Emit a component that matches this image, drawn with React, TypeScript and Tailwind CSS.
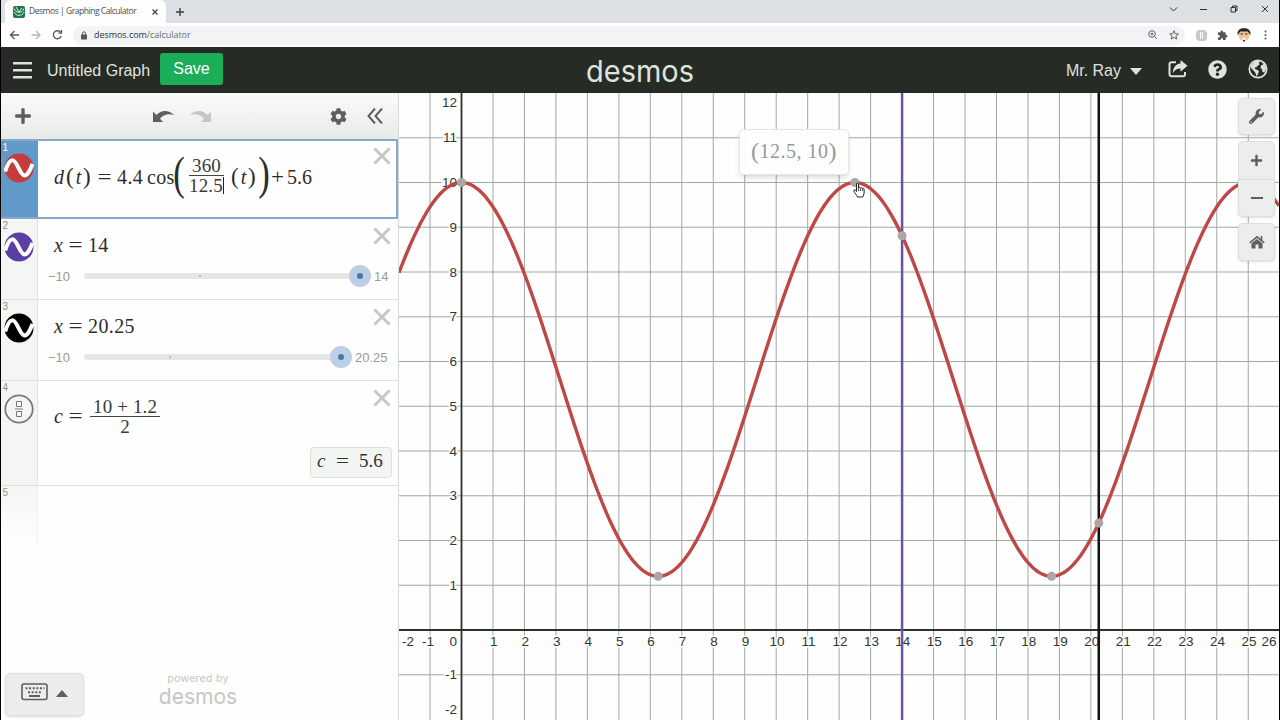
import type { ReactNode } from 'react';
import { FaCog, FaPlus, FaQuestionCircle, FaWrench } from 'react-icons/fa';
import { MdExtension } from 'react-icons/md';

// Graph paper: pixel size of the paper and the scale of one unit on each axis
const W = 880;
const H = 627;
const ORIGIN_X = 62.5;
const ORIGIN_Y = 537;
const UNIT_X = 31.47;
const UNIT_Y = 44.75;

const toX = (x: number) => ORIGIN_X + x * UNIT_X;
const toY = (y: number) => ORIGIN_Y - y * UNIT_Y;
const range = (from: number, to: number) =>
  Array.from({ length: to - from + 1 }, (_, i) => from + i);

const curve = Array.from({ length: W / 2 + 1 }, (_, i) => {
  const x = (i * 2 - ORIGIN_X) / UNIT_X;
  const y = 4.4 * Math.cos((2 * Math.PI * x) / 12.5) + 5.6;
  return `${i * 2},${toY(y).toFixed(2)}`;
}).join(' ');

const points = [
  [0, 10],
  [6.25, 1.2],
  [12.5, 10],
  [14, 8.81],
  [18.75, 1.2],
  [20.25, 2.39],
];

function Wordmark({ className, width }: { className: string; width: number }) {
  return (
    <svg
      className={`overflow-visible ${className}`}
      viewBox="0 0 110 38"
      width={width}
      height={(width * 38) / 110}
    >
      <text
        x="1"
        y="30"
        textLength="108"
        lengthAdjust="spacingAndGlyphs"
        fontFamily="Inter, sans-serif"
        fontSize="30"
        fill="currentColor"
      >
        desmos
      </text>
    </svg>
  );
}

function TabStrip() {
  return (
    <div className="flex h-[23px] bg-[#dee1e3] pl-1">
      <div className="flex w-[161px] items-center rounded-t-md bg-[#fdfefd] pl-2 pr-1.5">
        <svg width="12" height="12" viewBox="0 0 12 12" className="shrink-0">
          <rect width="12" height="12" rx="2" fill="#1c7a49" />
          <path d="M1 2.500c1.500 5 8.500 5 10 0M1 6c2 4.500 8 4.500 10 0M3 1l3 5 3-4" fill="none" stroke="#d8efe0" strokeWidth="1" />
        </svg>
        <span className="ml-1 whitespace-nowrap font-['Open_Sans',sans-serif] text-[8.500px] tracking-[-0.460px] text-[#4b4f52]">
          Desmos | Graphing Calculator
        </span>
        <svg width="6" height="6" viewBox="0 0 6 6" className="ml-auto mr-0.5 shrink-0 text-[#3c4043]">
          <path d="M.5.5l5 5M5.500.5l-5 5" stroke="currentColor" strokeWidth="1.200" />
        </svg>
      </div>
      <svg width="8" height="8" viewBox="0 0 8 8" className="ml-2.5 mt-[7.500px] text-[#3c4043]">
        <path d="M4 0v8M0 4h8" stroke="currentColor" strokeWidth="1.400" />
      </svg>
      <svg width="100" height="12" viewBox="0 0 100 12" className="ml-auto mr-2.5 mt-1 text-[#2c2f31]" fill="none" stroke="currentColor">
        <path d="M1 3.500l3.500 3.500L8 3.500" />
        <path d="M31 5.500h7" />
        <path d="M62 3.500h4.500V8H62zM63.500 3V2H68v4.500h-1" />
        <path d="M93 2l6 6M99 2l-6 6" />
      </svg>
    </div>
  );
}

function AddressBar() {
  return (
    <div className="flex h-6 items-center bg-[#fdfefd] pl-2 pr-3">
      <svg width="54" height="12" viewBox="0 0 54 12" fill="none" stroke="#54585b" strokeWidth="1.300">
        <path d="M10 6H1.500M5.500 2l-4 4 4 4" />
        <path d="M22.500 6H31M27 2l4 4-4 4" stroke="#b5b8ba" />
        <path d="M51.500 3.200a4 4 0 1 0 .7 3.800M52.500 1v3.200h-3.200" />
      </svg>
      <div className="ml-2.5 flex h-[19px] flex-1 items-center rounded-full bg-[#f1f3f4] pl-2 pr-1.5">
        <svg width="6" height="9" viewBox="0 0 6 9">
          <rect y="3.500" width="6" height="5" rx=".6" fill="#54585b" />
          <path d="M1.500 4V2.300a1.500 1.500 0 0 1 3 0V4" fill="none" stroke="#54585b" />
        </svg>
        <span className="ml-[7px] font-['Open_Sans',sans-serif] text-[9px] tracking-[-0.050px] text-[#2f3336]">
          desmos.com<span className="text-[#6a6e71]">/calculator</span>
        </span>
        <svg width="32" height="12" viewBox="0 0 32 12" className="ml-auto" fill="none" stroke="#5f6368">
          <circle cx="5" cy="5" r="3.300" />
          <path d="M7.500 7.500L10 10M3.500 5h3M5 3.500v3" />
          <path d="M27 1.700l1.200 3 3.200.2-2.500 2 .9 3.200L27 8.400l-2.800 1.700.9-3.200-2.500-2 3.200-.2z" />
        </svg>
      </div>
      <div className="ml-[11px] flex h-[11px] w-[11px] items-center justify-center rounded-sm bg-[#c5c7c8]">
        <div className="h-[7px] w-[3px] border-x border-white" />
      </div>
      <MdExtension className="ml-2.5 text-[11px] text-[#54585b]" />
      <svg width="14" height="14" viewBox="0 0 14 14" className="ml-[9px]">
        <ellipse cx="7" cy="7" rx="5.500" ry="6" fill="#eec39a" />
        <path d="M.5 7C0 2 3 .3 7 .3S14 2 13.500 7l-1.500-1.500L11 3.500H3L2 5.500z" fill="#34251d" />
        <path d="M3.500 6h2.500M8 6h2.500" stroke="#403027" />
        <path d="M5 10h4v1.500H5z" fill="#fff" />
        <path d="M6 12h2v1.500H6z" fill="#59382a" />
      </svg>
      <svg width="3" height="10" viewBox="0 0 3 10" className="ml-[13px]" fill="#54585b">
        <circle cx="1.500" cy="1.500" r="1" />
        <circle cx="1.500" cy="5" r="1" />
        <circle cx="1.500" cy="8.500" r="1" />
      </svg>
    </div>
  );
}

function AppHeader() {
  return (
    <header className="grid h-[46px] grid-cols-3 items-center bg-[#272b26] font-['Liberation_Sans',sans-serif] text-[#dfe3de]">
      <div className="flex items-center pl-3">
        <svg width="19" height="17" viewBox="0 0 19 17" fill="currentColor">
          <rect width="19" height="2.600" rx=".5" />
          <rect y="7" width="19" height="2.600" rx=".5" />
          <rect y="14" width="19" height="2.600" rx=".5" />
        </svg>
        <span className="ml-[15px] mt-0.5 w-[103px] whitespace-nowrap text-base">Untitled Graph</span>
        <button className="-mt-0.5 ml-2.5 h-8 w-[63px] rounded-[3px] bg-[#1bae58] text-base text-white">Save</button>
      </div>
      <Wordmark className="mt-px justify-self-center" width={110} />
      <div className="flex items-center justify-end pr-[11px]">
        <span className="mt-0.5 text-base">Mr. Ray</span>
        <svg width="12" height="7" viewBox="0 0 12 7" className="ml-[9px] mt-0.5" fill="currentColor">
          <path d="M0 0h12L6 7z" />
        </svg>
        <svg width="20" height="18" viewBox="0 0 20 18" className="-mt-0.5 ml-[26px]">
          <path
            d="M8 2.200H3.500A2 2 0 0 0 1.500 4.200v10a2 2 0 0 0 2 2h11.500a2 2 0 0 0 2-2V12"
            fill="none"
            stroke="currentColor"
            strokeWidth="2"
          />
          <path d="M12.500 0L19.500 5.800l-7 6V8.400C9 8.400 7 9.800 4.800 13 5 8 7.500 3.800 12.500 3.500z" fill="currentColor" />
        </svg>
        <FaQuestionCircle className="-mt-0.5 ml-5 text-[19px]" />
        <svg width="20" height="20" viewBox="0 0 20 20" className="-mt-0.5 ml-[21px]">
          <circle cx="10" cy="10" r="8.700" fill="none" stroke="currentColor" strokeWidth="1.700" />
          <path
            d="M3 6.500L6.500 2.500l3.500-1 2 1.200-1.500 1.600 1.500.8-2 1.300-2 2.200-1.500-.4.8 2L9.500 11l1.500 1.200-.8 2.400-1.700 3L7.500 14 5.500 11.500 3 9zM13 2.800l3.500 2.500 1.600 4-1.600 4.200-2-.6-.5-2.900-1.700-1 1-2.700 2.200-1z"
            fill="currentColor"
          />
        </svg>
      </div>
    </header>
  );
}

function PanelToolbar() {
  return (
    <div className="flex h-[46px] items-center bg-linear-to-b from-[#fafcfa] to-[#e7eae7] pl-[13px] pr-[15px] text-[#5c605c]">
      <FaPlus className="text-[18px]" />
      <svg width="21" height="13" viewBox="0 0 21 13" className="ml-[121px]" fill="currentColor">
        <path d="M0 1.500V12h10L7 8.800C10 5 15 3.300 21 5 16 0 8.500-.8 3.500 5z" />
      </svg>
      <svg width="21" height="13" viewBox="0 0 21 13" className="ml-4 text-[#c4c8c4]" fill="currentColor">
        <path d="M21 1.500V12H11l3-3.200C11 5 6 3.300 0 5 5 0 12.500-.8 17.500 5z" />
      </svg>
      <FaCog className="ml-auto text-[17px]" />
      <svg width="16" height="16" viewBox="0 0 16 16" className="ml-5" fill="none" stroke="currentColor" strokeWidth="2">
        <path d="M8 .5L1.500 8 8 15.500M15 .5L8.500 8l6.500 7.500" />
      </svg>
    </div>
  );
}

function CurveIcon({ color }: { color: string }) {
  return (
    <svg width="30" height="30" viewBox="0 0 30 30">
      <circle cx="15" cy="15" r="14.500" fill={color} />
      <path
        d="M1.200 18.500C3.500 11 6 7.300 8.500 7.300c4.500 0 7.500 15.200 12 15.200 3 0 5.200-4.500 8-11.500"
        fill="none"
        stroke="#fff"
        strokeWidth="4"
      />
    </svg>
  );
}

function FractionIcon() {
  return (
    <svg width="30" height="30" viewBox="0 0 30 30" fill="none" stroke="#777b77">
      <circle cx="15" cy="15" r="13.700" strokeWidth="1.800" />
      <path d="M12.500 7.500h5v5h-5zM12.500 17.500h5v5h-5zM11 15h8" />
    </svg>
  );
}

type RowProps = {
  index: number;
  height: string;
  icon?: ReactNode;
  selected?: boolean;
  children?: ReactNode;
};

function Row({ index, height, icon, selected, children }: RowProps) {
  return (
    <div className={`flex ${height} ${selected ? 'border-2 border-l-0 border-[#84a9cb]' : 'border-b border-[#dbe1db]'}`}>
      <div
        className={`w-[37px] shrink-0 pl-[2.500px] font-['Liberation_Sans',sans-serif] text-[10px] leading-[11px] ${
          selected ? 'bg-[#6399c8] text-white' : 'border-r border-[#dfe6df] bg-[#f4f6f4] text-[#8c908c]'
        }`}
      >
        <div className={selected ? 'h-3 pt-px' : 'h-[13px] pt-px'}>
          <span className="-ml-px">{index}</span>
        </div>
        {icon}
      </div>
      <div className="min-w-0 flex-1 font-['Liberation_Serif',serif] text-[20px] text-[#2c2c2c]">{children}</div>
      <svg
        width="18"
        height="18"
        viewBox="0 0 18 18"
        className={`shrink-0 ${selected ? 'mr-[5px] mt-1.5' : 'mr-[7px] mt-2'}`}
        stroke="#c5c8c5"
        strokeWidth="3"
      >
        <path d="M1.500 1.500l15 15M16.500 1.500l-15 15" />
      </svg>
    </div>
  );
}

function Equals() {
  return <span className="flex w-[13px] shrink-0 scale-x-125 justify-center">=</span>;
}

function Frac({ top, bottom, caret }: { top: string; bottom: string; caret?: boolean }) {
  return (
    <span className="inline-flex flex-col items-stretch text-center text-[19px] leading-[19px] tracking-[0.150px] text-[#3a3a3a]">
      <span className="whitespace-nowrap border-b border-[#444] px-[3px]">{top}</span>
      <span className="flex justify-center">
        {bottom}
        {caret && <span className="h-[17px] w-px self-center bg-[#222]" />}
      </span>
    </span>
  );
}

// Tall bracket that wraps a whole fraction
function TallParen({ children }: { children: string }) {
  return (
    <span className="mb-1.5 flex w-2 shrink-0 scale-x-75 justify-center text-[46px] leading-[46px]">{children}</span>
  );
}

type SliderProps = { value: string; track: string; zero: string };

function Slider({ value, track, zero }: SliderProps) {
  return (
    <div className="-mr-5 flex h-6 items-center pl-2.5 font-['Liberation_Sans',sans-serif] text-[13px] text-[#999c99]">
      <span className="w-9 pt-px">−10</span>
      <div className={`flex h-1.5 items-center rounded-full bg-[#e4e7e4] ${track}`}>
        <span className={`size-0.5 rounded-full bg-[#a5a8a5] ${zero}`} />
        <span className="-mr-[11px] ml-auto flex size-[22px] items-center justify-center rounded-full bg-[#bccfe4]">
          <span className="size-1.5 rounded-full bg-[#4776a8]" />
        </span>
      </div>
      <span className="ml-3.5 pt-px">{value}</span>
    </div>
  );
}

function ExpressionPanel() {
  return (
    <aside className="flex w-[398px] shrink-0 flex-col border-r border-[#d4dbd6] bg-[#fdfefd]">
      <PanelToolbar />
      <Row index={1} height="h-20" selected icon={<CurveIcon color="#c33d3f" />}>
        <div className="-mr-5 flex h-[72px] items-center whitespace-nowrap pl-4">
          <i className="w-[12px]">d</i>
          <span className="w-2 text-[23px]">(</span>
          <i className="w-[9px] text-center">t</i>
          <span className="w-[15px] text-[23px]">)</span>
          <Equals />
          <span className="ml-[6px] w-[30px] tracking-[0.400px]">4.4</span>
          <span className="w-[28px] tracking-[0.300px]">cos</span>
          <TallParen>(</TallParen>
          <span className="mb-[3px] ml-[6px] flex w-[38px]">
            <Frac top="360" bottom="12.5" caret />
          </span>
          <span className="ml-[4px] w-[8px] text-[23px]">(</span>
          <i className="w-[9px] text-center">t</i>
          <span className="w-[12px] text-[23px]">)</span>
          <TallParen>)</TallParen>
          <span className="ml-[3px] flex w-[13px] scale-x-115 justify-center">+</span>
          <span className="ml-[3px]">5.6</span>
        </div>
      </Row>
      <Row index={2} height="h-[81px]" icon={<CurveIcon color="#5b3fa5" />}>
        <div className="flex h-[45px] items-center pl-4 pt-1.5">
          <i className="w-[15px]">x</i>
          <Equals />
          <span className="ml-[6px] tracking-[0.300px]">14</span>
        </div>
        <Slider value="14" track="w-[276px]" zero="ml-[115px]" />
      </Row>
      <Row index={3} height="h-[81px]" icon={<CurveIcon color="#000" />}>
        <div className="flex h-[45px] items-center pl-4 pt-1.5">
          <i className="w-[15px]">x</i>
          <Equals />
          <span className="ml-[6px] tracking-[0.400px]">20.25</span>
        </div>
        <Slider value="20.25" track="w-[257px]" zero="ml-[85px]" />
      </Row>
      <Row index={4} height="h-[105px]" icon={<FractionIcon />}>
        <div className="flex h-[66px] items-center pl-4 pt-1">
          <i className="w-[15px]">c</i>
          <Equals />
          <span className="ml-[8px] flex">
            <Frac top="10 + 1.2" bottom="2" />
          </span>
        </div>
        <div className="-mr-[19px] flex justify-end">
          <div className="flex h-[31px] w-[82px] items-center rounded-sm border border-[#dce0dc] bg-[#f3f5f3] pb-0.5 pl-1.5 text-[19px] text-[#333]">
            <i className="w-[19px]">c</i>
            <Equals />
            <span className="ml-2.5">5.6</span>
          </div>
        </div>
      </Row>
      <div className="h-[56px] w-[37px] border-r border-[#eef2ee] bg-linear-to-b from-[#f4f6f4] to-[#fdfefd] pl-[1.500px] pt-px font-['Liberation_Sans',sans-serif] text-[10px] leading-[11px] text-[#8c908c]">
        5
      </div>
      <div className="mt-auto flex items-end">
        <button className="mb-1 ml-1 flex h-[43px] w-[79px] items-center justify-center gap-2 rounded-[5px] border border-[#dde1dd] bg-[#eaedea] pb-1.5 text-[#5c605c] shadow-sm">
          <svg width="27" height="18" viewBox="0 0 27 18">
            <rect x="1" y="1" width="25" height="15.500" rx="2" fill="none" stroke="currentColor" strokeWidth="1.600" />
            <path d="M4.500 5.200h19M7 9.200h14" stroke="currentColor" strokeWidth="2" strokeDasharray="2 1.600" />
            <path d="M8 13h11" stroke="currentColor" strokeWidth="2" />
          </svg>
          <svg width="12" height="7" viewBox="0 0 12 7" className="mt-1" fill="currentColor">
            <path d="M0 7h12L6 0z" />
          </svg>
        </button>
        <div className="mb-2.5 ml-[74px] flex flex-col items-center text-[#c3c8c3]">
          <span className="font-['Inter',sans-serif] text-[10.500px] leading-3 tracking-wide">powered by</span>
          <Wordmark className="-mt-[3px]" width={80} />
        </div>
      </div>
    </aside>
  );
}

function GraphPaper() {
  return (
    <svg width={W} height={H} className="block bg-[#fdfefd]">
      <g stroke="#a2a9a2">
        {range(-1, 25).map((x) => (
          <line key={x} x1={toX(x)} x2={toX(x)} y1={0} y2={H} />
        ))}
        {range(-1, 11).map((y) => (
          <line key={y} x1={0} x2={W} y1={toY(y)} y2={toY(y)} />
        ))}
      </g>
      <path d={`M${ORIGIN_X} 0V${H}M0 ${ORIGIN_Y}H${W}`} stroke="#2e322e" strokeWidth="1.800" />
      <g
        fontFamily="Liberation Sans, sans-serif"
        fontSize="13.500"
        fill="#333733"
        stroke="#fdfefd"
        strokeWidth="3"
        paintOrder="stroke"
      >
        {range(-2, 26)
          .filter((x) => x !== 0)
          .map((x) => (
            <text key={x} x={x === -2 ? 9 : x === 26 ? 870 : toX(x) + (x < 0 ? -2 : 0.8)} y={553} textAnchor="middle">
              {x}
            </text>
          ))}
        <text x="58" y="553" textAnchor="end">0</text>
        {range(-2, 12)
          .filter((y) => y !== 0)
          .map((y) => (
            <text key={y} x={58} y={y === 12 ? 14 : y === -2 ? 621 : toY(y) + 4.5} textAnchor="end">
              {y}
            </text>
          ))}
      </g>
      <path d={`M${toX(14)} 0V${H}`} stroke="#6e51a4" strokeWidth="2.500" />
      <path d={`M${toX(20.25)} 0V${H}`} stroke="#111411" strokeWidth="2.500" />
      <polyline points={curve} fill="none" stroke="#be4747" strokeWidth="3.400" />
      {points.map(([x, y]) => (
        <circle key={x} cx={toX(x)} cy={toY(y)} r="4.500" fill="#aaa7a5" />
      ))}
    </svg>
  );
}

function GraphButton({ children, className }: { children: ReactNode; className: string }) {
  return (
    <button
      className={`flex w-[37px] items-center justify-center border border-[#dce0dc] bg-[#ebeeeb] text-[#5c605c] ${className}`}
    >
      {children}
    </button>
  );
}

function GraphControls() {
  return (
    <div className="absolute right-1 top-[5px] flex flex-col">
      <GraphButton className="h-[37px] rounded-[5px] shadow-sm">
        <FaWrench className="text-[15px]" />
      </GraphButton>
      <GraphButton className="mt-1.5 h-[39px] rounded-t-[5px]">
        <FaPlus className="text-[13px]" />
      </GraphButton>
      <GraphButton className="-mt-px h-[38px] rounded-b-[5px] shadow-sm">
        <span className="h-0.5 w-3 bg-current" />
      </GraphButton>
      <GraphButton className="mt-1.5 h-[38px] rounded-[5px] shadow-sm">
        <svg width="16" height="14" viewBox="0 0 16 14" fill="currentColor">
          <path d="M8 4l5.500 4.500V13.500H9.500V9.500h-3v4h-4V8.500z" />
          <path d="M.8 7.800L8 1.800l7.200 6M12.500 1v4" fill="none" stroke="currentColor" strokeWidth="1.600" />
        </svg>
      </GraphButton>
    </div>
  );
}

function Graph() {
  return (
    <main className="relative min-w-0 flex-1 overflow-hidden">
      <GraphPaper />
      <div className="absolute left-[340px] top-[36px] flex h-[46px] w-[110px] items-center justify-center rounded-[4px] border border-[#e3e7e3] bg-[#fdfefd]/95 pb-0.5 font-['Liberation_Serif',serif] text-[20px] tracking-[0.500px] text-[#969a96] shadow-md">
        <span className="text-[24px]">(</span>12.5, 10<span className="text-[24px]">)</span>
      </div>
      <svg width="12" height="16" viewBox="0 0 12 16" className="absolute left-[454px] top-[89px]">
        <path
          d="M3.500 9.500V2c0-1.600 2-1.600 2 0v4c.2-1 1.800-1 2 .2.300-.9 1.800-.6 1.900.4.500-.7 1.700-.3 1.700.7V11c0 1.800-1 2.500-1.300 4H4.500C4 13 1.800 11.500.8 9c-.4-1 .8-1.700 1.500-.9z"
          fill="#fff"
          stroke="#222"
        />
        <path d="M5.500 6v3M7.500 6.500V9M9.400 7v2" stroke="#222" strokeWidth=".8" />
      </svg>
      <GraphControls />
    </main>
  );
}

export default function App() {
  return (
    <div className="flex h-[720px] w-[1280px] flex-col overflow-hidden border-x border-black bg-[#fdfefd]">
      <TabStrip />
      <AddressBar />
      <AppHeader />
      <div className="flex min-h-0 flex-1">
        <ExpressionPanel />
        <Graph />
      </div>
    </div>
  );
}
